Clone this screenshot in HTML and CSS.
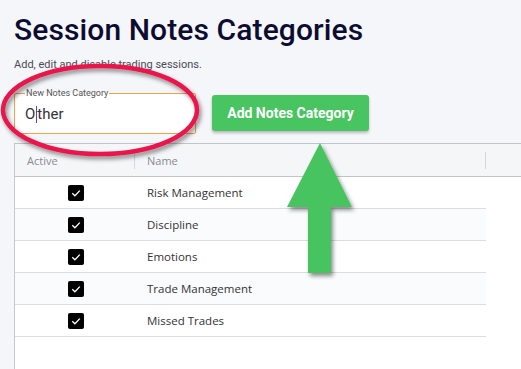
FILE: index.html
```html
<!DOCTYPE html>
<html>
<head>
<meta charset="utf-8">
<link rel="stylesheet" href="styles.css">
</head>
<body>
<div class="page">
  <h1 class="title">Session Notes Categories</h1>
  <p class="subtitle">Add, edit and disable trading sessions.</p>
  <div class="form-row">
    <div class="field">
      <span class="field-label">New Notes Category</span>
      <div class="field-value">O<span class="caret"></span>ther</div>
    </div>
    <button class="add-btn">Add Notes Category</button>
  </div>
  <div class="grid">
    <div class="grid-head">
      <div class="cell-active">Active</div>
      <div class="cell-name">Name</div>
      <div class="cell-rest"></div>
    </div>
    <div class="grid-row">
      <div class="cell-active"><span class="check"><svg viewBox="0 0 16 16" width="16" height="16"><path d="M4.3 8.2 L6.9 10.8 L11.8 5.6" fill="none" stroke="#fff" stroke-width="1.3"/></svg></span></div>
      <div class="cell-name">Risk Management</div>
    </div>
    <div class="grid-row alt">
      <div class="cell-active"><span class="check"><svg viewBox="0 0 16 16" width="16" height="16"><path d="M4.3 8.2 L6.9 10.8 L11.8 5.6" fill="none" stroke="#fff" stroke-width="1.3"/></svg></span></div>
      <div class="cell-name">Discipline</div>
    </div>
    <div class="grid-row">
      <div class="cell-active"><span class="check"><svg viewBox="0 0 16 16" width="16" height="16"><path d="M4.3 8.2 L6.9 10.8 L11.8 5.6" fill="none" stroke="#fff" stroke-width="1.3"/></svg></span></div>
      <div class="cell-name">Emotions</div>
    </div>
    <div class="grid-row alt">
      <div class="cell-active"><span class="check"><svg viewBox="0 0 16 16" width="16" height="16"><path d="M4.3 8.2 L6.9 10.8 L11.8 5.6" fill="none" stroke="#fff" stroke-width="1.3"/></svg></span></div>
      <div class="cell-name">Trade Management</div>
    </div>
    <div class="grid-row">
      <div class="cell-active"><span class="check"><svg viewBox="0 0 16 16" width="16" height="16"><path d="M4.3 8.2 L6.9 10.8 L11.8 5.6" fill="none" stroke="#fff" stroke-width="1.3"/></svg></span></div>
      <div class="cell-name">Missed Trades</div>
    </div>
  </div>
</div>
<svg class="annotations" width="521" height="369" viewBox="0 0 521 369">
  <defs>
    <filter id="sh" x="-20%" y="-20%" width="140%" height="140%">
      <feDropShadow dx="2" dy="3" stdDeviation="2" flood-color="#000" flood-opacity="0.45"/>
    </filter>
  </defs>
  <ellipse cx="100" cy="110" rx="97" ry="44" fill="none" stroke="#e8174b" stroke-width="4.5" filter="url(#sh)"/>
  <polygon points="320,143 352,207 331,207 331,273 308,273 308,207 287,207" fill="#47c45f" filter="url(#sh)"/>
</svg>
</body>
</html>
```
FILE: styles.css
```css
html, body {
  margin: 0;
  padding: 0;
}
body {
  width: 521px;
  height: 369px;
  overflow: hidden;
  background: #f5f6fa;
  font-family: Roboto, "Liberation Sans", sans-serif;
  position: relative;
}
.page {
  padding: 12px 0 0 14px;
}
.title {
  margin: 0;
  font-size: 30px;
  font-weight: 500;
  color: #0c0c30;
  line-height: 36px;
  letter-spacing: 0.1px;
}
.subtitle {
  margin: 10px 0 0 0;
  font-size: 11px;
  color: #4a4a55;
  line-height: 14px;
}
.form-row {
  display: flex;
  align-items: flex-start;
  margin-top: 21px;
  gap: 16px;
}
.field {
  position: relative;
  box-sizing: border-box;
  width: 182px;
  height: 41px;
  padding: 0 10px;
  border: 1px solid #eea24a;
  border-radius: 2px;
  background: #fff;
}
.field-label {
  position: absolute;
  left: 10px;
  top: -6px;
  font-size: 9px;
  color: #555;
  padding: 0 1px;
  line-height: 10px;
  background: linear-gradient(#f5f6fa 50%, #fff 50%);
}
.field-value {
  font-size: 15px;
  color: #333;
  line-height: 18px;
  margin-top: 11px;
}
.caret {
  display: inline-block;
  width: 1px;
  height: 17px;
  background: #5b3fc4;
  vertical-align: -4px;
  margin-left: 1px;
}
.add-btn {
  margin-top: 2px;
  height: 36px;
  width: 157px;
  padding: 0;
  border: none;
  border-radius: 3px;
  background: #48c461;
  color: #fff;
  font-family: Roboto, "Liberation Sans", sans-serif;
  font-weight: 700;
  font-size: 14px;
  box-shadow: 0 2px 3px rgba(0,0,0,0.25);
}
.grid {
  margin-top: 9px;
  height: 240px;
  border-left: 1px solid #c8c8cc;
  border-top: 1px solid #c4c4c8;
  background: #fff;
  font-family: "Open Sans", "Noto Sans", sans-serif;
  font-size: 11px;
}
.grid-head {
  display: flex;
  height: 32px;
  align-items: center;
  background: #f5f6f8;
  border-bottom: 1px solid #c4c4c8;
  color: #8a8a90;
}
.grid-head .cell-active {
  padding-left: 12px;
  box-sizing: border-box;
}
.grid-head .cell-name {
  border-left: 1px solid #d8d8dc;
  height: 17px;
  line-height: 17px;
  padding-left: 12px;
  box-sizing: border-box;
}
.grid-head .cell-rest {
  border-left: 1px solid #d8d8dc;
  height: 17px;
}
.cell-active {
  width: 119px;
  flex: none;
}
.cell-name {
  width: 351px;
  flex: none;
}
.grid-row {
  display: flex;
  align-items: center;
  width: 471px;
  height: 31px;
  border-bottom: 1px solid #dcdcdf;
  color: #333;
}
.grid-row .cell-active {
  display: flex;
  justify-content: center;
}
.grid-row .cell-name {
  padding-left: 13px;
  box-sizing: border-box;
  font-size: 11.5px;
}
.grid-row.alt {
  background: #fafbfd;
}
.check {
  display: block;
  width: 16px;
  height: 16px;
  background: #000;
  border-radius: 2px;
  margin-left: 2px;
}
.check svg {
  display: block;
}
.annotations {
  position: absolute;
  left: 0;
  top: 0;
  pointer-events: none;
}
```
